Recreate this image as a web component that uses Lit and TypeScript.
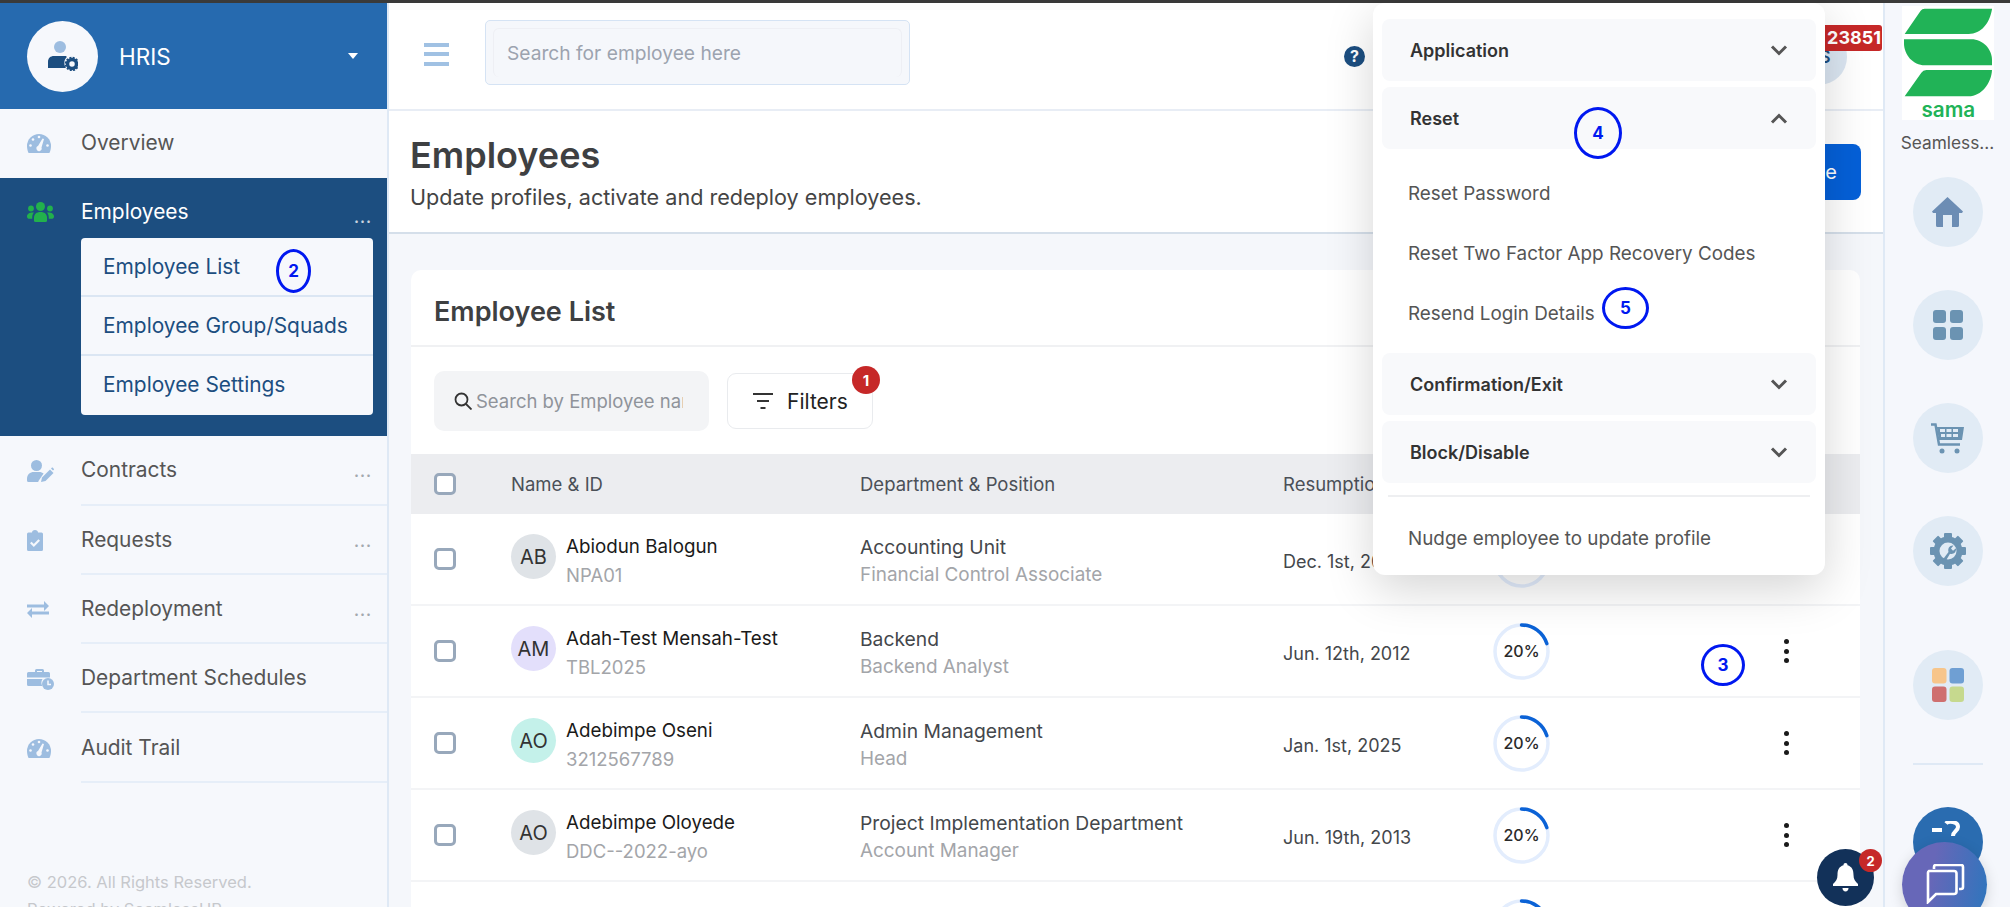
import { LitElement, css, html, svg } from "lit";
import { customElement } from "lit/decorators.js";

const gauge = html`<svg width="24" height="19" viewBox="0 0 24 19"><path fill="#9dbde0" d="M12 0A12 12 0 0 0 0 12c0 2.600.6 5 1.600 7h20.800c1-2 1.600-4.400 1.600-7A12 12 0 0 0 12 0z"/><g fill="#f6f8fc"><circle cx="12" cy="3" r="1.300"/><circle cx="6" cy="5.500" r="1.300"/><circle cx="3.500" cy="11.500" r="1.300"/><circle cx="20.500" cy="11.500" r="1.300"/><path d="M15.500 4.500l1.500.6-2.500 8.500a2.600 2.600 0 1 1-3.500-1.500z"/></g></svg>`;

const groupIcon = html`<svg width="27" height="20" viewBox="0 0 27 20" fill="#22b14c"><circle cx="13.500" cy="4.500" r="4.500"/><circle cx="4" cy="6.500" r="2.900"/><circle cx="23" cy="6.500" r="2.900"/><path d="M7 16c0-4 2.500-6 6.500-6s6.500 2 6.500 6v2.500a1.500 1.500 0 0 1-1.500 1.500h-10A1.500 1.500 0 0 1 7 18.500z"/><path d="M5.500 10.500C2.500 10.500 0 12 0 14.500c0 1.500 1 2.300 2.500 2.300h2.700c0-2.600.2-4.600 1.800-6.200z"/><path d="M21.500 10.500c3 0 5.500 1.500 5.500 4 0 1.500-1 2.300-2.500 2.300h-2.700c0-2.600-.2-4.600-1.800-6.200z"/></svg>`;

const contractIcon = html`<svg width="27" height="22" viewBox="0 0 27 22" fill="#9dbde0"><circle cx="9.500" cy="5.500" r="5.500"/><path d="M0 19c0-4.500 3-7 7-7h5c2 0 3.500.6 4.600 1.600L11.500 21c-.2.400-.2.700-.2 1H1.500A1.500 1.500 0 0 1 0 20.500z"/><path d="M14 22l1-4.500L23 9.500l3.500 3.500-8 8z"/><path d="M24 8.500l1.200-1.200 2 2L26 10.500z"/></svg>`;

const requestIcon = html`<svg width="16" height="21" viewBox="0 0 16 21"><path fill="#9dbde0" d="M1.500 2.500H5C5 1 6.200 0 8 0s3 1 3 2.500h3.500A1.500 1.500 0 0 1 16 4v15.500a1.500 1.500 0 0 1-1.500 1.500h-13A1.500 1.500 0 0 1 0 19.500V4a1.500 1.500 0 0 1 1.500-1.500z"/><path fill="none" stroke="#f6f8fc" stroke-width="2.200" d="M3.800 12.500l3 3 5.400-5.500"/></svg>`;

const swapIcon = html`<svg width="22" height="17" viewBox="0 0 22 17" fill="#9dbde0"><path d="M0 3.500h17V0l5 5-5 5V6.500H0z"/><path d="M22 10.500H5V7l-5 5 5 5v-3.500h17z"/></svg>`;

const scheduleIcon = html`<svg width="27" height="22" viewBox="0 0 27 22" fill="#9dbde0"><path d="M8 2.500A1.500 1.500 0 0 1 9.500 1h6A1.500 1.500 0 0 1 17 2.500V4h-2V3h-5v1H8z"/><path d="M1.500 4h20A1.500 1.500 0 0 1 23 5.500V9.500H0V5.500A1.500 1.500 0 0 1 1.500 4z"/><path d="M0 11h15.500a7 7 0 0 0-.2 7H1.500A1.500 1.500 0 0 1 0 16.500z"/><circle cx="21" cy="16" r="6"/><path fill="none" stroke="#f6f8fc" stroke-width="1.500" d="M21 12.500V16.500h3"/></svg>`;

const chevron = (up = false) => html`<svg width="18" height="11" viewBox="0 0 18 11"><path fill="none" stroke="#555" stroke-width="3" d=${up ? "M2 9.500l7-7 7 7" : "M2 1.500l7 7 7-7"}/></svg>`;

const homeIcon = html`<svg width="31" height="30" viewBox="0 0 31 30" fill="#6c8db4"><path d="M15.500 0L31 14.500l-1 1.500h-3v12.500a1.500 1.500 0 0 1-1.500 1.500H20V18h-9v12H5.500A1.500 1.500 0 0 1 4 28.500V16H1l-1-1.500z"/></svg>`;

const gridIcon = html`<svg width="30" height="30" viewBox="0 0 30 30" fill="#6b93b2"><rect width="13" height="13" rx="3"/><rect x="17" width="13" height="13" rx="3"/><rect y="17" width="13" height="13" rx="3"/><rect x="17" y="17" width="13" height="13" rx="3"/></svg>`;

const cartIcon = html`<svg width="33" height="31" viewBox="0 0 33 31"><path fill="none" stroke="#6b93b2" stroke-width="2.500" d="M0 1.500h4.500l3.500 20h21"/><path fill="#6b93b2" d="M5.800 4H33l-2 13H8zM9 6v3h5V6zm6.500 0v3h5V6zm6.500 0v3h5V6zM10 11v3h4v-3zm5.500 0v3h5v-3zm6.500 0v3h5v-3z" fill-rule="evenodd"/><circle fill="#6b93b2" cx="11" cy="28" r="2.500"/><circle fill="#6b93b2" cx="26" cy="28" r="2.500"/></svg>`;

const gearIcon = html`<svg width="36" height="36" viewBox="0 0 36 36"><g fill="#6b93b2"><circle cx="18" cy="18" r="14.500"/>${[0, 45, 90, 135, 180, 225, 270, 315].map((a) => svg`<rect x="14" y="0" width="8" height="8" rx="1" transform="rotate(${a} 18 18)"/>`)}</g><circle cx="18" cy="18" r="8.500" fill="#e1ebf5"/><path fill="#6b93b2" d="M12.500 27l6-8c-1-3.500 1-7 5-6.500l-2.500 3 2 2.200 3-2.500c.5 4-2.500 6.500-6 5.500l-4.500 7.500z"/></svg>`;

const appsIcon = html`<svg width="32" height="34" viewBox="0 0 32 34"><rect width="14.500" height="15.500" rx="3" fill="#f7c58a"/><rect x="17.500" width="14.500" height="15.500" rx="3" fill="#6f9fd3"/><rect y="18.500" width="14.500" height="15.500" rx="3" fill="#cf6f6f"/><rect x="17.500" y="18.500" width="14.500" height="15.500" rx="3" fill="#c6d98e"/></svg>`;

const navTop = [
  { label: "Contracts", icon: contractIcon, more: true },
  { label: "Requests", icon: requestIcon, more: true },
  { label: "Redeployment", icon: swapIcon, more: true },
  { label: "Department Schedules", icon: scheduleIcon, more: false },
  { label: "Audit Trail", icon: gauge, more: false },
];

const employees = [
  { initials: "AB", tint: "#dfe3e7", name: "Abiodun Balogun", id: "NPA01", dept: "Accounting Unit", role: "Financial Control Associate", date: "Dec. 1st, 2023" },
  { initials: "AM", tint: "#e3dffb", name: "Adah-Test Mensah-Test", id: "TBL2025", dept: "Backend", role: "Backend Analyst", date: "Jun. 12th, 2012" },
  { initials: "AO", tint: "#c4f1ea", name: "Adebimpe Oseni", id: "3212567789", dept: "Admin Management", role: "Head", date: "Jan. 1st, 2025" },
  { initials: "AO", tint: "#dfe3e7", name: "Adebimpe Oloyede", id: "DDC--2022-ayo", dept: "Project Implementation Department", role: "Account Manager", date: "Jun. 19th, 2013" },
  { initials: "", tint: "#c4f1ea", name: "", id: "", dept: "", role: "", date: "" },
];

@customElement("app-root")
export class AppRoot extends LitElement {
  static override styles = css`
    :host {
      display: block;
      position: relative;
      width: 2010px;
      height: 907px;
      overflow: hidden;
      background: #f5f7fb;
      font-family: "Inter", sans-serif;
      color: #4b5058;
    }
    .topline { height: 3px; background: #3a3a3a; }
    .app { display: flex; height: 904px; }

    .side {
      width: 387px;
      flex: none;
      background: #f6f8fc;
      border-right: 2px solid #dfe9f5;
      overflow: hidden;
    }
    .brand {
      height: 106px;
      background: #266aaf;
      display: flex;
      align-items: center;
      padding: 0 29px 0 27px;
      color: #fff;
      font-size: 22.500px;
    }
    .brand-logo {
      width: 71px;
      height: 71px;
      border-radius: 50%;
      background: #f6f8fc;
      display: flex;
      align-items: center;
      justify-content: center;
      margin-right: 21px;
    }
    .caret {
      margin-left: auto;
      border-left: 5.500px solid transparent;
      border-right: 5.500px solid transparent;
      border-top: 6.500px solid #fff;
    }
    .nav-row { display: flex; height: 69.300px; color: #555; font-size: 20.900px; }
    .nav-icon { width: 81px; flex: none; padding-left: 27px; box-sizing: border-box; display: flex; align-items: center; }
    .nav-body {
      flex: 1;
      display: flex;
      align-items: center;
      justify-content: space-between;
      border-bottom: 2px solid #e6eef8;
      padding-right: 15px;
    }
    .nav-row.plain .nav-body { border-bottom: none; padding-bottom: 2px; }
    .more { font-size: 15px; font-weight: 700; letter-spacing: 1px; color: #a3a8ae; padding-top: 4px; }
    .active { background: #1c4e80; height: 258px; color: #fff; font-size: 20.900px; }
    .active-head { display: flex; height: 60px; }
    .active-head .nav-body { border: none; align-items: flex-start; padding-top: 21px; }
    .active-head .nav-icon { padding-top: 8px; }
    .active-head .more { color: #c8d3df; padding-top: 9px; }
    .submenu {
      margin-left: 81px;
      width: 292px;
      background: #f6f8fc;
      border-radius: 4px;
      color: #1c4e80;
    }
    .submenu div {
      height: 59px;
      box-sizing: border-box;
      padding: 16px 0 0 22px;
      border-bottom: 2px solid #dbe6f3;
    }
    .submenu div:last-child { border-bottom: none; }
    .side-foot {
      margin-top: 86px;
      padding-left: 27px;
      font-size: 16.500px;
      line-height: 27px;
      color: #c6c8cc;
    }

    .main { flex: 1; min-width: 0; display: flex; flex-direction: column; overflow: hidden; }
    .topbar {
      height: 108px;
      flex: none;
      box-sizing: border-box;
      background: #fff;
      border-bottom: 2px solid #e8edf5;
      display: flex;
      align-items: center;
      padding: 0 0 7px 35px;
    }
    .burger { width: 25px; display: flex; flex-direction: column; gap: 5.500px; margin: 3px 36px 0 0; }
    .burger span { height: 4px; background: #a0c1e3; }
    .search-outer {
      width: 425px;
      height: 65px;
      box-sizing: border-box;
      padding: 7px 7px 7px;
      background: #f5f7fb;
      border: 1.500px solid #d5e3f4;
      border-radius: 5px;
    }
    .search-inner {
      height: 100%;
      box-sizing: border-box;
      border: 1px solid #eeeff4;
      border-bottom: none;
      border-radius: 6px;
      padding: 0 13px;
      display: flex;
      align-items: center;
      font-size: 19.200px;
      color: #9ca3af;
    }
    .help {
      margin: 7px 0 0 auto;
      width: 21px;
      height: 21px;
      border-radius: 50%;
      background: #1c4e80;
      color: #fff;
      font-size: 16px;
      font-weight: 700;
      display: flex;
      align-items: center;
      justify-content: center;
    }
    .user {
      position: relative;
      width: 56px;
      height: 56px;
      margin: 9px 36px 0 426px;
      border-radius: 50%;
      background: #dbe6f2;
      color: #1c4e80;
      font-size: 17px;
      font-weight: 600;
      display: flex;
      align-items: center;
      justify-content: center;
    }
    .score {
      position: absolute;
      right: -35px;
      top: -4px;
      background: #c62828;
      color: #fff;
      font-size: 18px;
      font-weight: 700;
      line-height: 26px;
      padding-right: 1px;
      width: 66px;
      text-align: right;
      border-radius: 3px;
      box-sizing: border-box;
    }

    .head {
      height: 123px;
      flex: none;
      box-sizing: border-box;
      background: #fff;
      border-bottom: 2px solid #d5dfea;
      padding: 22px 22px 0 21px;
      display: flex;
      justify-content: space-between;
    }
    .head h1 { margin: 0; font-size: 36px; line-height: 44px; font-weight: 600; color: #3e4042; }
    .head p { margin: 5px 0 0; font-size: 21.600px; line-height: 30px; color: #444; }
    .add {
      height: 56px;
      margin-top: 11px;
      padding: 0 24px;
      background: #0560d8;
      border-radius: 8px;
      color: #fff;
      font-size: 20px;
      display: flex;
      align-items: center;
    }

    .content { padding: 36px 23px 0 22px; }
    .card { background: #fff; border-radius: 10px 10px 0 0; }
    .card-title {
      height: 77px;
      box-sizing: border-box;
      border-bottom: 2px solid #f0f1f3;
      padding: 7px 0 0 23px;
      display: flex;
      align-items: center;
      font-size: 27px;
      font-weight: 600;
      color: #3e4042;
    }
    .tools { display: flex; align-items: center; gap: 18px; padding: 24px 23px 23px; }
    .find {
      width: 275px;
      height: 60px;
      box-sizing: border-box;
      padding-left: 20px;
      background: #f3f4f6;
      border-radius: 10px;
      display: flex;
      align-items: center;
      gap: 4px;
      font-size: 18.500px;
      color: #8f939a;
      overflow: hidden;
    }
    .find span { width: 207px; overflow: hidden; white-space: nowrap; }
    .filters {
      position: relative;
      width: 146px;
      height: 56px;
      box-sizing: border-box;
      border: 1.500px solid #e9ebee;
      border-radius: 9px;
      padding-left: 25px;
      display: flex;
      align-items: center;
      gap: 14px;
      font-size: 21px;
      color: #222;
    }
    .filter-badge {
      position: absolute;
      right: -8px;
      top: -8px;
      width: 28px;
      height: 28px;
      border-radius: 50%;
      background: #c62828;
      color: #fff;
      font-size: 15px;
      font-weight: 700;
      display: flex;
      align-items: center;
      justify-content: center;
    }
    .grid {
      display: grid;
      grid-template-columns: 77px 349px 423px 210px 291px 1fr;
      padding-left: 23px;
      align-items: center;
    }
    .thead { height: 60px; background: #ecedf0; font-size: 18.500px; color: #4b5058; }
    .row { height: 92px; box-sizing: border-box; border-bottom: 2px solid #f3f4f6; background: #fff; }
    .check {
      display: block;
      width: 22px;
      height: 22px;
      box-sizing: border-box;
      border: 3px solid #98a8bb;
      border-radius: 5px;
      background: #fff;
    }
    .person { display: flex; gap: 10px; align-items: flex-start; margin-top: 4px; }
    .face {
      width: 45px;
      height: 45px;
      flex: none;
      margin-top: 1px;
      border-radius: 50%;
      display: flex;
      align-items: center;
      justify-content: center;
      font-size: 20px;
      color: #333;
    }
    .dept { margin-top: 4px; }
    .main-line { font-size: 18.800px; line-height: 28px; color: #1a1a1a; white-space: nowrap; }
    .dept .main-line { font-size: 19.300px; color: #44474b; }
    .sub-line { font-size: 18.500px; line-height: 28px; color: #a3a5a9; white-space: nowrap; }
    .dept .sub-line { font-size: 18.900px; }
    .date { font-size: 18px; color: #44474b; padding-top: 4px; white-space: nowrap; }
    .ring { position: relative; width: 57px; height: 57px; }
    .ring span {
      position: absolute;
      inset: 0;
      display: flex;
      align-items: center;
      justify-content: center;
      font-size: 16px;
      font-weight: 500;
      color: #2a2a2a;
    }
    .kebab { display: flex; flex-direction: column; gap: 4.500px; width: 5px; }
    .kebab i { width: 5px; height: 5px; border-radius: 50%; background: #1a1a1a; }

    .rail {
      width: 125px;
      flex: none;
      border-left: 2px solid #dfe9f5;
      background: #f5f7fc;
      display: flex;
      flex-direction: column;
      align-items: center;
      padding-top: 3px;
    }
    .logo { width: 92px; height: 114px; background: #fff; display: block; }
    .rail-name { font-size: 17.300px; color: #555; line-height: 28px; margin: 9px 0 20px; white-space: nowrap; }
    .disc {
      width: 70px;
      height: 70px;
      flex: none;
      border-radius: 50%;
      background: #e1ebf5;
      display: flex;
      align-items: center;
      justify-content: center;
      margin-bottom: 43px;
    }
    .disc.gear { margin-bottom: 64px; }
    .rail-line { width: 70px; height: 2px; flex: none; background: #dfe9f5; }
    .disc.blue { margin: 42px 0 0; background: #2a6cb0; align-items: flex-start; padding-top: 14px; box-sizing: border-box; }

    .menu {
      position: absolute;
      left: 1373px;
      top: 3px;
      width: 452px;
      height: 572px;
      box-sizing: border-box;
      padding: 16px 9px 0;
      background: #fff;
      border-radius: 12px;
      box-shadow: 0 14px 48px rgba(0, 0, 0, 0.17);
      z-index: 2;
    }
    .acc {
      height: 62px;
      box-sizing: border-box;
      background: #f8f9fb;
      border-radius: 8px;
      padding: 0 28px 0 28px;
      display: flex;
      align-items: center;
      justify-content: space-between;
      font-size: 18px;
      font-weight: 600;
      color: #333;
      margin-bottom: 6px;
    }
    .items { padding: 8px 0 10px; }
    .item { height: 60px; padding-left: 26px; font-size: 18.850px; color: #555; display: flex; align-items: center; }
    .menu hr { border: none; height: 2px; background: #eeeff1; margin: 12px 6px 0; }
    .nudge { margin-top: 11px; }

    .mark {
      position: absolute;
      box-sizing: border-box;
      border: 3.500px solid #0018f0;
      border-radius: 50%;
      color: #0018f0;
      font-size: 17px;
      font-weight: 700;
      display: flex;
      align-items: center;
      justify-content: center;
      z-index: 3;
    }
    .bell {
      position: absolute;
      left: 1817px;
      top: 849px;
      width: 57px;
      height: 57px;
      border-radius: 50%;
      background: #123159;
      display: flex;
      align-items: center;
      justify-content: center;
      z-index: 3;
    }
    .bell b {
      position: absolute;
      right: -8px;
      top: 0;
      width: 23px;
      height: 23px;
      border-radius: 50%;
      background: #c62828;
      color: #fff;
      font-size: 13px;
      display: flex;
      align-items: center;
      justify-content: center;
    }
    .chat {
      position: absolute;
      left: 1902px;
      top: 842px;
      width: 85px;
      height: 85px;
      border-radius: 50%;
      background: linear-gradient(100deg, #6767b8 35%, #2c76bd);
      display: flex;
      justify-content: center;
      padding-top: 22px;
      box-sizing: border-box;
      box-shadow: 0 4px 14px rgba(0, 0, 0, 0.15);
      z-index: 3;
    }
  `;

  ring(pct: number) {
    const c = 2 * Math.PI * 26.5;
    return html`<div class="ring">
      <svg width="57" height="57" viewBox="0 0 57 57">
        <circle cx="28.500" cy="28.500" r="26.500" fill="none" stroke="#e3edfd" stroke-width="3.500"/>
        <circle cx="28.500" cy="28.500" r="26.500" fill="none" stroke="#0b62d6" stroke-width="3.500" stroke-linecap="round"
          stroke-dasharray="${(pct / 100) * c} ${c}" transform="rotate(-90 28.500 28.500)"/>
      </svg>
      <span>${pct}%</span>
    </div>`;
  }

  render() {
    return html`
      <div class="topline"></div>
      <div class="app">
        <aside class="side">
          <div class="brand">
            <div class="brand-logo">
              <svg width="30" height="30" viewBox="0 0 30 30">
                <circle cx="12" cy="6" r="6" fill="#9dbde0"/>
                <path fill="#1c4e80" d="M0 27v-6c0-4 2.500-6 6-6h11c1.500 0 2 .5 1.500 1.500-2.500 2-3 7-.5 10.500z"/>
                <circle cx="24" cy="23" r="4.500" fill="none" stroke="#1c4e80" stroke-width="3.500"/>
                <circle cx="24" cy="23" r="6.500" fill="none" stroke="#1c4e80" stroke-width="1.500" stroke-dasharray="2 1.400"/>
              </svg>
            </div>
            HRIS
            <span class="caret"></span>
          </div>
          <div class="nav-row plain">
            <div class="nav-icon">${gauge}</div>
            <div class="nav-body">Overview</div>
          </div>
          <div class="active">
            <div class="active-head">
              <div class="nav-icon">${groupIcon}</div>
              <div class="nav-body">Employees<span class="more">...</span></div>
            </div>
            <div class="submenu">
              <div>Employee List</div>
              <div>Employee Group/Squads</div>
              <div>Employee Settings</div>
            </div>
          </div>
          ${navTop.map(
            (n) => html`<div class="nav-row">
              <div class="nav-icon">${n.icon}</div>
              <div class="nav-body">${n.label}${n.more ? html`<span class="more">...</span>` : ""}</div>
            </div>`
          )}
          <div class="side-foot">© 2026. All Rights Reserved.<br />Powered by SeamlessHR</div>
        </aside>

        <div class="main">
          <div class="topbar">
            <div class="burger"><span></span><span></span><span></span></div>
            <div class="search-outer"><div class="search-inner">Search for employee here</div></div>
            <div class="help">?</div>
            <div class="user">AS<div class="score">23851</div></div>
          </div>
          <div class="head">
            <div>
              <h1>Employees</h1>
              <p>Update profiles, activate and redeploy employees.</p>
            </div>
            <div class="add">Add Employee</div>
          </div>
          <div class="content">
            <div class="card">
              <div class="card-title">Employee List</div>
              <div class="tools">
                <div class="find">
                  <svg width="18" height="18" viewBox="0 0 18 18"><circle cx="7.500" cy="7.500" r="6" fill="none" stroke="#333" stroke-width="1.800"/><path stroke="#333" stroke-width="1.800" d="M12 12l5.500 5.500"/></svg>
                  <span>Search by Employee name</span>
                </div>
                <div class="filters">
                  <svg width="20" height="16" viewBox="0 0 20 16"><path stroke="#333" stroke-width="1.800" d="M0 1h20M4 8h12M7.500 15h5"/></svg>
                  Filters
                  <div class="filter-badge">1</div>
                </div>
              </div>
              <div class="grid thead">
                <span class="check"></span>
                <div>Name &amp; ID</div>
                <div>Department &amp; Position</div>
                <div>Resumption Date</div>
                <div>Profile</div>
                <div></div>
              </div>
              ${employees.map(
                (e) => html`<div class="grid row">
                  <span class="check"></span>
                  <div class="person">
                    <div class="face" style="background:${e.tint}">${e.initials}</div>
                    <div>
                      <div class="main-line">${e.name}</div>
                      <div class="sub-line">${e.id}</div>
                    </div>
                  </div>
                  <div class="dept">
                    <div class="main-line">${e.dept}</div>
                    <div class="sub-line">${e.role}</div>
                  </div>
                  <div class="date">${e.date}</div>
                  ${this.ring(20)}
                  <div class="kebab"><i></i><i></i><i></i></div>
                </div>`
              )}
            </div>
          </div>
        </div>

        <div class="rail">
          <svg class="logo" viewBox="62 18 276 342">
            <g fill="#21b357">
              <path d="M70 102L118 32q4-6 12-6H332v2c-7 42-32 74-70 74z"/>
              <path d="M68 118H270c35 0 62 30 62 62v16H130c-35 0-62-31-62-66z"/>
              <path d="M70 289l50-71q5-8 15-8H332c-2 40-32 79-70 79z"/>
            </g>
            <text x="201" y="351" text-anchor="middle" font-family="Inter, sans-serif" font-weight="600" font-size="62" fill="#21b357">sama</text>
          </svg>
          <div class="rail-name">Seamless...</div>
          <div class="disc">${homeIcon}</div>
          <div class="disc">${gridIcon}</div>
          <div class="disc">${cartIcon}</div>
          <div class="disc gear">${gearIcon}</div>
          <div class="disc">${appsIcon}</div>
          <div class="rail-line"></div>
          <div class="disc blue">
            <svg width="32" height="20" viewBox="0 0 32 20"><path fill="none" stroke="#fff" stroke-width="4" d="M14 2.500C16 0 26 0 26 6c0 4-5 4-5 9M0 9h10"/></svg>
          </div>
        </div>
      </div>

      <div class="menu">
        <div class="acc">Application ${chevron()}</div>
        <div class="acc">Reset ${chevron(true)}</div>
        <div class="items">
          <div class="item">Reset Password</div>
          <div class="item">Reset Two Factor App Recovery Codes</div>
          <div class="item">Resend Login Details</div>
        </div>
        <div class="acc">Confirmation/Exit ${chevron()}</div>
        <div class="acc">Block/Disable ${chevron()}</div>
        <hr />
        <div class="item nudge">Nudge employee to update profile</div>
      </div>

      <div class="mark" style="left:276px;top:249px;width:35px;height:44px">2</div>
      <div class="mark" style="left:1701px;top:644px;width:44px;height:42px">3</div>
      <div class="mark" style="left:1574px;top:107px;width:48px;height:52px">4</div>
      <div class="mark" style="left:1602px;top:287px;width:47px;height:42px">5</div>

      <div class="bell">
        <svg width="25" height="29" viewBox="0 0 25 29" fill="#fff"><path d="M12.500 0c1.300 0 2 .9 2 2.200C19 3.500 20.500 7 20.500 12c0 4 1.500 6 4.500 9v2H0v-2c3-3 4.500-5 4.500-9 0-5 1.500-8.500 6-9.800 0-1.300.7-2.200 2-2.200z"/><path d="M9.500 25h6c0 2-1.300 3.500-3 3.500s-3-1.500-3-3.500z"/></svg>
        <b>2</b>
      </div>
      <div class="chat">
        <svg width="40" height="40" viewBox="0 0 40 40" fill="none" stroke="#fff" stroke-width="2.600"><path d="M9 5V3a2 2 0 0 1 2-2h25a2 2 0 0 1 2 2v20a2 2 0 0 1-2 2h-2"/><path d="M4 7h25a2.500 2.500 0 0 1 2.500 2.500v18a2.500 2.500 0 0 1-2.500 2.500H11l-8 8V9.500A2.500 2.500 0 0 1 4 7z"/></svg>
      </div>
    `;
  }
}
